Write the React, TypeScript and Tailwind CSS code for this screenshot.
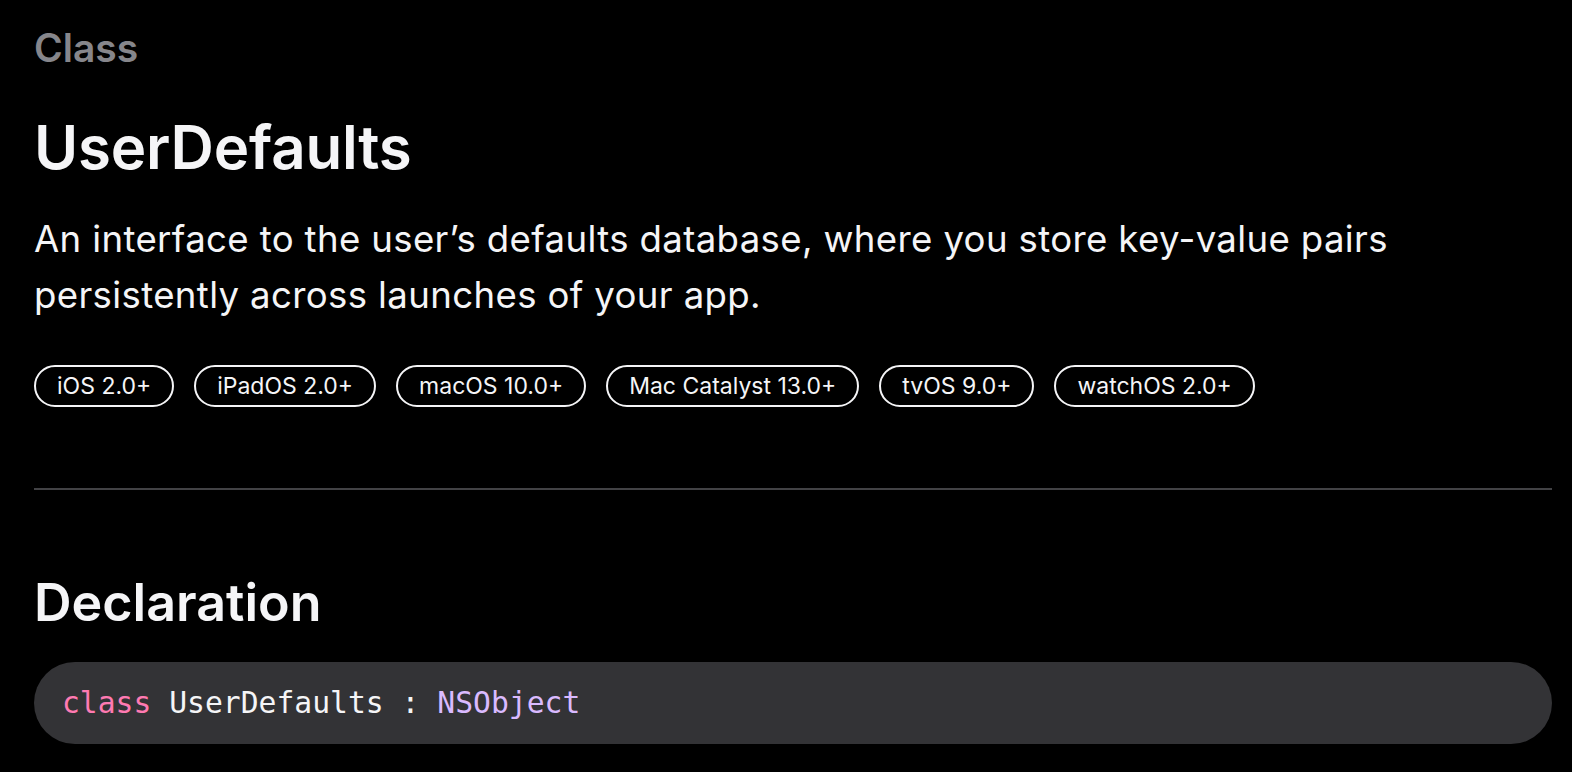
const platforms = [
  "iOS 2.0+",
  "iPadOS 2.0+",
  "macOS 10.0+",
  "Mac Catalyst 13.0+",
  "tvOS 9.0+",
  "watchOS 2.0+",
];

export default function App() {
  return (
    <div className="min-h-screen bg-black text-[#f5f5f7] font-['Inter','Noto_Sans',sans-serif]">
      <main className="pl-[34px] pr-[20px] pt-[28px] pb-10">
        {/* Topic header */}
        <div className="text-[39px] leading-[40px] font-semibold text-[#86868b]">Class</div>
        <h1 className="mt-[47px] text-[60px] leading-[64px] font-semibold tracking-[-0.003em]">UserDefaults</h1>
        <p className="mt-[32px] text-[36.6px] leading-[56px] tracking-[0.01em]">
          An interface to the user’s defaults database, where you store key-value pairs persistently
          across launches of your app.
        </p>

        {/* Availability */}
        <ul className="mt-[42px] flex flex-wrap gap-[20px]">
          {platforms.map((p) => (
            <li
              key={p}
              className="h-[42px] px-[21px] flex items-center rounded-full border-2 border-[#f5f5f7] text-[23px] leading-none"
            >
              {p}
            </li>
          ))}
        </ul>

        <hr className="mt-[81px] h-[2px] border-0 bg-[#424245]" />

        {/* Declaration */}
        <h2 className="mt-[85px] text-[52px] leading-[56px] font-semibold">Declaration</h2>
        <div className="mt-[31px] h-[82px] flex items-center rounded-full bg-[#333336] px-[28px]">
          <code className="font-['DejaVu_Sans_Mono','Liberation_Mono',monospace] text-[29.7px] leading-none whitespace-pre">
            <span className="text-[#ff7ab2]">class</span>
            <span> UserDefaults : </span>
            <span className="text-[#dabaff]">NSObject</span>
          </code>
        </div>
      </main>
    </div>
  );
}
